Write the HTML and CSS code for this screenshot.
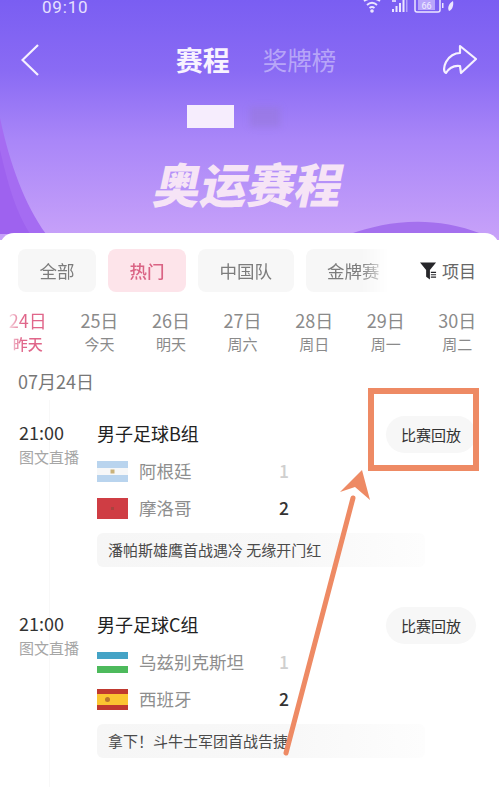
FILE: index.html
```html
<!DOCTYPE html>
<html>
<head>
  <meta charset="UTF-8">
  <title>奥运赛程</title>
  <link rel="stylesheet" href="styles.css">
</head>
<body>
  <div class="page">
    <div class="hero">
      <svg class="hero-bg" viewBox="0 0 499 234" preserveAspectRatio="none">
        <path d="M0 118 C10 165 25 205 46 234 L0 234 Z" fill="#a56cf2"/>
        <path d="M0 150 C8 185 16 212 30 234 L0 234 Z" fill="#9a5cec" opacity="0.6"/>
        <path d="M350 234 C385 222 430 214 482 234 Z" fill="#a470ee"/>
      </svg>
      <div class="status-bar">
        <span class="clock">09:10</span>
        <svg class="status-icons" width="92" height="14" viewBox="0 0 92 14">
          <g fill="none" stroke="#ece6ff" stroke-width="1.8">
            <path d="M1 1 C5 -2 13 -2 17 1"/>
            <path d="M4 5 C7 2 11 2 14 5"/>
            <path d="M6.500 8 C8 6.800 10 6.800 11.500 8"/>
          </g>
          <circle cx="9" cy="11" r="1.800" fill="#ece6ff"/>
          <g fill="#ece6ff">
            <rect x="29" y="9" width="2" height="3"/>
            <rect x="32.500" y="6" width="2" height="6"/>
            <rect x="36" y="3" width="2" height="9"/>
            <rect x="39.500" y="0" width="2" height="12"/>
            <rect x="43" y="0" width="1.500" height="12" opacity="0.5"/>
            <rect x="29" y="0" width="4" height="2" opacity="0.8"/>
          </g>
          <rect x="52" y="-2" width="25" height="14" rx="2" fill="none" stroke="#ece6ff" stroke-width="1.500"/>
          <rect x="55" y="0" width="17" height="10" fill="#b9a6fb"/>
          <text x="63.500" y="8.500" text-anchor="middle" class="battery-text">66</text>
          <rect x="79" y="3" width="1.500" height="5" fill="#ece6ff"/>
          <path d="M90 1 C91 6 89 10 86 11 C84 8 86 3 90 1 Z" fill="#ece6ff"/>
        </svg>
      </div>
      <div class="nav">
        <svg class="nav-back" width="18" height="32" viewBox="0 0 18 32">
          <path d="M17 1 L1.500 16 L17 31" fill="none" stroke="#f6f1ff" stroke-width="2.200"/>
        </svg>
        <div class="nav-tabs">
          <span class="nav-tab active">赛程</span>
          <span class="nav-tab">奖牌榜</span>
        </div>
        <svg class="nav-share" width="34" height="32" viewBox="0 0 34 32">
          <path d="M17 2 L33 15 L18 29 L17 22 C10 21 6 24 3 29 C0 28 1 22 3 18 C6 12 12 9 17 9 Z" fill="none" stroke="#f6f1ff" stroke-width="2.200" stroke-linejoin="round"/>
        </svg>
      </div>
      <div class="mosaic">
        <div class="mosaic-white"></div>
        <div class="mosaic-dim"></div>
      </div>
      <div class="hero-title">奥运赛程</div>
    </div>

    <div class="sheet">
      <div class="filter-row">
        <div class="tabs">
          <span class="tab">全部</span>
          <span class="tab hot">热门</span>
          <span class="tab">中国队</span>
          <span class="tab">金牌赛</span>
        </div>
        <div class="filter">
          <svg width="17" height="18" viewBox="0 0 18 18">
            <path d="M0 0 H17 L10.500 8 V18 L6.500 15 V8 Z" fill="#26262a"/>
            <path d="M11.500 10.500 H17 M11.500 13 H17 M11.500 15.500 H17" stroke="#26262a" stroke-width="1.200"/>
          </svg>
          <span>项目</span>
        </div>
      </div>

      <div class="dates">
        <div class="date active"><b>24日</b><span>昨天</span></div>
        <div class="date"><b>25日</b><span>今天</span></div>
        <div class="date"><b>26日</b><span>明天</span></div>
        <div class="date"><b>27日</b><span>周六</span></div>
        <div class="date"><b>28日</b><span>周日</span></div>
        <div class="date"><b>29日</b><span>周一</span></div>
        <div class="date"><b>30日</b><span>周二</span></div>
      </div>

      <div class="day">07月24日</div>

      <div class="matches">
        <div class="match">
          <div class="match-time">
            <div class="time">21:00</div>
            <div class="live">图文直播</div>
          </div>
          <div class="match-body">
            <div class="match-head">
              <span class="match-name">男子足球B组</span>
              <span class="replay">比赛回放</span>
            </div>
            <div class="team">
              <svg class="flag" viewBox="0 0 31 21">
                <rect width="31" height="21" fill="#b9d4ee"/>
                <rect y="7" width="31" height="7" fill="#f6f7f8"/>
                <rect x="13.500" y="8.500" width="4" height="4" fill="#c9b27a"/>
              </svg>
              <span class="team-name">阿根廷</span>
              <span class="score lose">1</span>
            </div>
            <div class="team">
              <svg class="flag" viewBox="0 0 31 21">
                <rect width="31" height="21" fill="#cf3d44"/>
                <rect x="14" y="9" width="3" height="3" fill="#a8433f"/>
              </svg>
              <span class="team-name">摩洛哥</span>
              <span class="score">2</span>
            </div>
            <div class="news">潘帕斯雄鹰首战遇冷 无缘开门红</div>
          </div>
        </div>

        <div class="match">
          <div class="match-time">
            <div class="time">21:00</div>
            <div class="live">图文直播</div>
          </div>
          <div class="match-body">
            <div class="match-head">
              <span class="match-name">男子足球C组</span>
              <span class="replay">比赛回放</span>
            </div>
            <div class="team">
              <svg class="flag" viewBox="0 0 31 21">
                <rect width="31" height="7" fill="#44a3c6"/>
                <rect y="14" width="31" height="7" fill="#4dba5c"/>
              </svg>
              <span class="team-name">乌兹别克斯坦</span>
              <span class="score lose">1</span>
            </div>
            <div class="team">
              <svg class="flag" viewBox="0 0 31 21">
                <rect width="31" height="21" fill="#c0392f"/>
                <rect y="5" width="31" height="11" fill="#fbc531"/>
                <circle cx="10.500" cy="10.500" r="2.500" fill="#b9742e"/>
              </svg>
              <span class="team-name">西班牙</span>
              <span class="score">2</span>
            </div>
            <div class="news">拿下！斗牛士军团首战告捷</div>
          </div>
        </div>
      </div>
    </div>

    <svg class="markup" viewBox="0 0 499 787">
      <rect x="371" y="391" width="105" height="77" fill="none" stroke="#ee8a64" stroke-width="6"/>
      <path d="M286 753 L353 498" fill="none" stroke="#ee8a64" stroke-width="5" stroke-linecap="round"/>
      <path d="M362 470 L340 492 L355 487 L370 500 Z" fill="#ee8a64"/>
    </svg>
  </div>
</body>
</html>
```

FILE: styles.css
```css
* {
  box-sizing: border-box;
}

body {
  margin: 0;
  font-family: "Noto Sans CJK SC", "Noto Sans", sans-serif;
}

.page {
  position: relative;
  width: 499px;
  height: 787px;
  overflow: hidden;
  background: #fff;
}

/* 顶部紫色区域 */
.hero {
  position: relative;
  height: 240px;
  background: linear-gradient(180deg, #7a5ef2 0%, #8a6bf4 30%, #a986f8 58%, #c8a2f9 100%);
}

.hero-bg {
  position: absolute;
  left: 0;
  top: 0;
  width: 499px;
  height: 234px;
}

.status-bar {
  position: relative;
  display: flex;
  justify-content: space-between;
  height: 15px;
  padding: 0 44px 0 42px;
}

.clock {
  font-family: Roboto, sans-serif;
  font-size: 17px;
  line-height: 15px;
  letter-spacing: 0.800px;
  color: #e6e0ff;
}

.status-icons {
  display: block;
  margin-right: 0;
}

.battery-text {
  font-family: Roboto, sans-serif;
  font-size: 9px;
  fill: #f0ecff;
}

.nav {
  position: relative;
  display: flex;
  align-items: center;
  justify-content: space-between;
  height: 44px;
  margin-top: 23px;
  padding: 0 22px 0 21px;
}

.nav-tabs {
  display: flex;
  align-items: center;
  gap: 33px;
  margin-left: 30px;
}

.nav-tab {
  font-size: 24.500px;
  line-height: 34px;
  color: rgba(255, 255, 255, 0.42);
}

.nav-tab.active {
  font-size: 27px;
  font-weight: 700;
  color: #f8f3ff;
}

.mosaic {
  position: relative;
  display: flex;
  align-items: center;
  gap: 16px;
  margin: 23px 0 0 187px;
}

.mosaic-white {
  width: 47px;
  height: 23px;
  background: #f6edfd;
}

.mosaic-dim {
  width: 30px;
  height: 20px;
  background: rgba(150, 120, 215, 0.5);
  filter: blur(3px);
}

.hero-title {
  position: relative;
  margin-top: 28px;
  text-align: center;
  font-size: 47px;
  font-weight: 900;
  line-height: 54px;
  color: #f6e4f6;
  transform: skewX(-12deg);
}

/* 白色卡片 */
.sheet {
  position: relative;
  height: 554px;
  margin-top: -7px;
  padding-top: 16px;
  background: #fff;
  border-radius: 14px 14px 0 0;
  overflow: hidden;
}

.filter-row {
  display: flex;
  align-items: center;
  height: 43px;
}

.tabs {
  display: flex;
  gap: 12px;
  width: 393px;
  padding-left: 18px;
  overflow: hidden;
  -webkit-mask-image: linear-gradient(90deg, #000 92%, transparent 99%);
  mask-image: linear-gradient(90deg, #000 92%, transparent 99%);
}

.tab {
  flex: none;
  padding: 0 21.500px;
  font-size: 17.500px;
  line-height: 43px;
  color: #7c7c7c;
  background: #f7f7f7;
  border-radius: 8px;
}

.tab.hot {
  font-weight: 500;
  color: #da6384;
  background: #fde4ea;
}

.filter {
  display: flex;
  align-items: center;
  gap: 5px;
  margin-left: 27px;
  font-size: 17px;
  color: #666;
}

.dates {
  display: flex;
  margin: 16px 0 0 -8px;
}

.date {
  flex: none;
  width: 71.600px;
  text-align: center;
  color: #8a8a8a;
}

.date b {
  display: block;
  font-size: 18px;
  font-weight: 400;
  line-height: 24px;
}

.date span {
  display: block;
  font-size: 15px;
  line-height: 24px;
}

.date.active {
  color: #e0668a;
  -webkit-mask-image: linear-gradient(90deg, transparent 18%, #000 42%);
  mask-image: linear-gradient(90deg, transparent 18%, #000 42%);
}

.date.active span {
  font-weight: 500;
}

.day {
  margin: 13px 0 0 18px;
  font-size: 18px;
  line-height: 24px;
  color: #777;
}

.matches {
  position: relative;
  margin-top: 22px;
}

.matches::before {
  content: "";
  position: absolute;
  left: 49px;
  top: -15px;
  bottom: -200px;
  width: 1px;
  background: #f8f8f8;
}

.match {
  position: relative;
  display: flex;
  height: 191px;
  padding-left: 19px;
}

.match-time {
  width: 78px;
  padding-top: 3px;
}

.time {
  font-size: 18px;
  line-height: 28px;
  color: #333;
}

.live {
  margin-top: 1px;
  font-size: 15px;
  line-height: 20px;
  color: #a6a6a6;
}

.match-body {
  flex: 1;
  padding-right: 23px;
}

.match-head {
  display: flex;
  align-items: center;
  justify-content: space-between;
  height: 38px;
}

.match-name {
  padding-bottom: 3px;
  font-size: 18px;
  color: #222;
}

.replay {
  padding: 0 15px;
  font-size: 15px;
  line-height: 37px;
  color: #333;
  background: #f7f7f7;
  border-radius: 18.500px;
}

.team {
  display: flex;
  align-items: center;
  height: 37px;
}

.flag {
  width: 31px;
  height: 21px;
  margin-right: 11px;
}

.team-name {
  width: 140px;
  padding-bottom: 2px;
  font-size: 17.500px;
  color: #8e8e8e;
}

.score {
  padding-bottom: 2px;
  font-size: 17.500px;
  font-weight: 500;
  color: #333;
}

.score.lose {
  color: #cfcfcf;
}

.news {
  width: 328px;
  margin-top: 6px;
  padding-left: 11px;
  font-size: 15px;
  line-height: 34px;
  color: #4a4a4a;
  background: linear-gradient(90deg, #f6f6f6 0%, #f8f8f8 60%, #fdfdfd 100%);
  border-radius: 6px;
}

/* 标注 */
.markup {
  position: absolute;
  left: 0;
  top: 0;
  width: 499px;
  height: 787px;
}
```
